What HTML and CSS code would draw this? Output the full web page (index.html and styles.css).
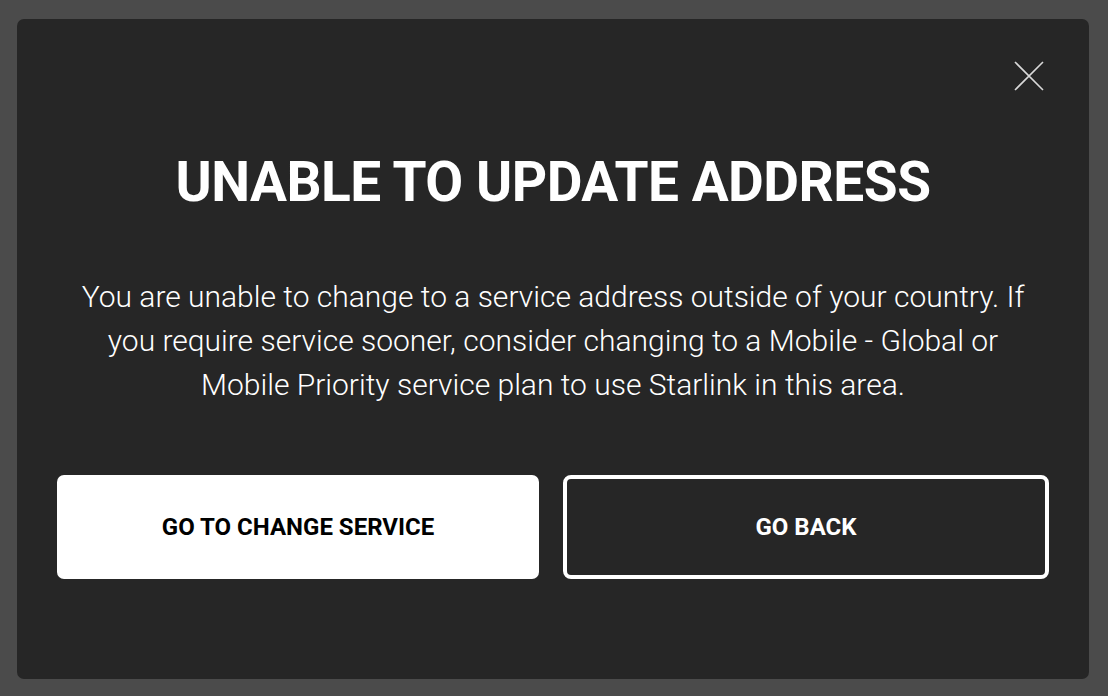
FILE: index.html
```html
<!DOCTYPE html>
<html lang="en">
<head>
<meta charset="utf-8">
<title>Unable to update address</title>
<link rel="stylesheet" href="styles.css">
</head>
<body>
<div class="modal" role="dialog" aria-labelledby="t">
  <div class="top">
    <button class="close" aria-label="Close">
      <svg width="30" height="30" viewBox="0 0 30 30"><path d="M1 1L29 29M29 1L1 29" stroke="#d9d9d9" stroke-width="1.6" fill="none"/></svg>
    </button>
  </div>
  <h1 class="title" id="t">UNABLE TO UPDATE ADDRESS</h1>
  <p class="msg">You are unable to change to a service address outside of your country. If you require service sooner, consider changing to a Mobile - Global or Mobile Priority service plan to use Starlink in this area.</p>
  <div class="actions">
    <button class="btn primary">GO TO CHANGE SERVICE</button>
    <button class="btn outline">GO BACK</button>
  </div>
</div>
</body>
</html>
```

FILE: styles.css
```css
html, body {
  margin: 0;
  padding: 0;
  background: #4b4b4b;
}
body {
  padding: 19px 19px 17px 17px;
  font-family: Roboto, "Liberation Sans", sans-serif;
}
.modal {
  width: 1072px;
  height: 660px;
  box-sizing: border-box;
  background: #262626;
  border-radius: 7px;
  padding: 37px 40px 0;
  display: flex;
  flex-direction: column;
  align-items: stretch;
}
.top {
  display: flex;
  justify-content: flex-end;
}
.close {
  width: 40px;
  height: 40px;
  padding: 0;
  margin: 0;
  border: 0;
  background: transparent;
  display: flex;
  align-items: center;
  justify-content: center;
}
.title {
  margin: 56px 0 0;
  color: #fff;
  text-align: center;
  font-size: 55px;
  line-height: 60px;
  font-weight: 700;
  letter-spacing: -0.5px;
}
.msg {
  margin: 63px auto 0;
  max-width: 960px;
  color: #fff;
  text-align: center;
  font-size: 30px;
  line-height: 44px;
  font-weight: 300;
}
.actions {
  margin-top: 68px;
  display: grid;
  grid-template-columns: 482fr 486fr;
  gap: 24px;
}
.btn {
  height: 104px;
  box-sizing: border-box;
  font-family: Roboto, "Liberation Sans", sans-serif;
  font-size: 24px;
  font-weight: 700;
  border-radius: 7px;
}
.primary {
  background: #fff;
  color: #000;
  border: 0;
}
.outline {
  background: transparent;
  color: #fff;
  border: 4px solid #fff;
  border-radius: 8px;
}
```
